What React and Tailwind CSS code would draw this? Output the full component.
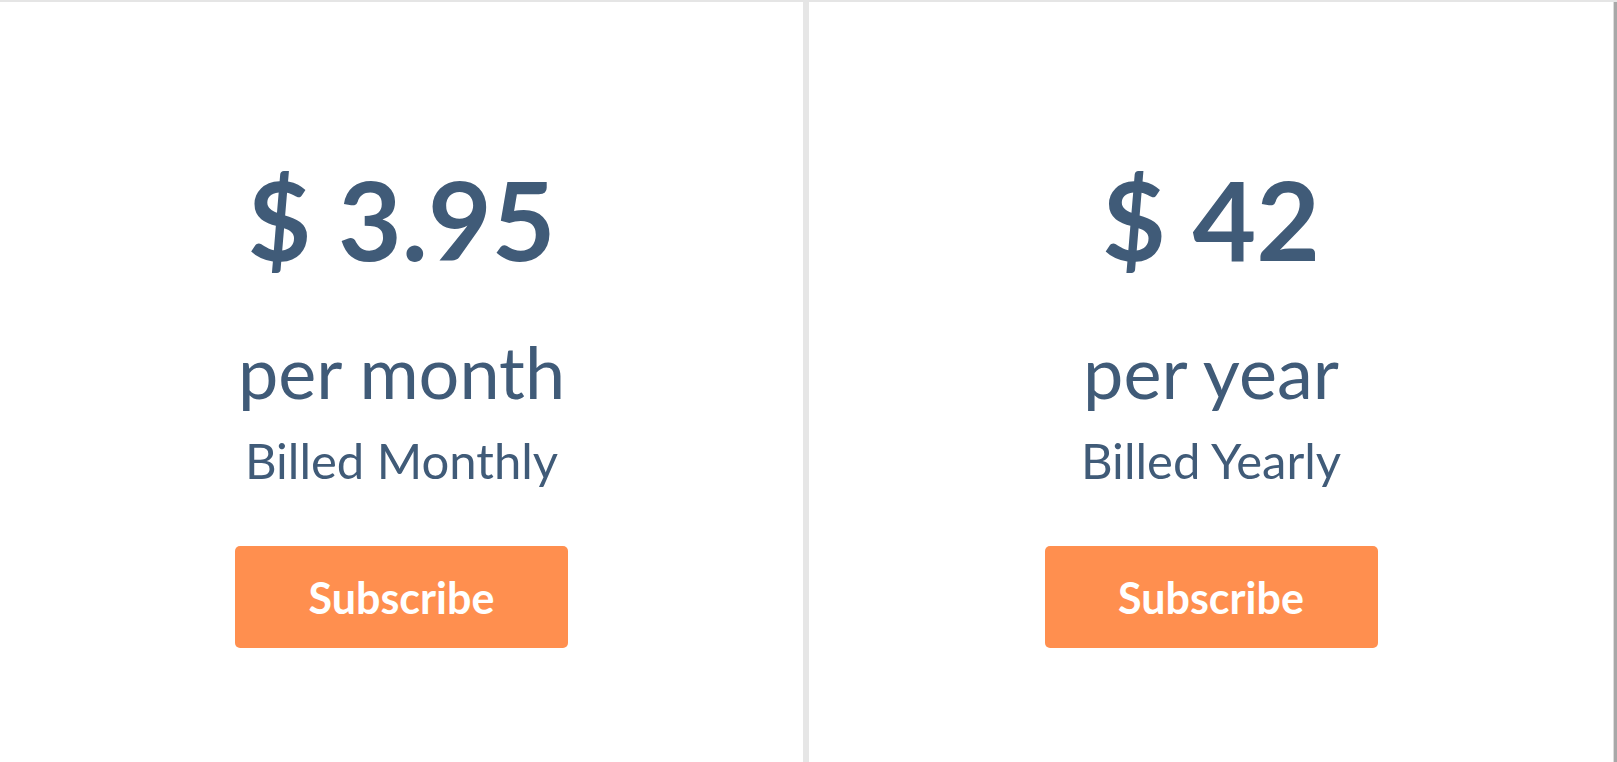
const plans = [
  { price: "$ 3.95", period: "per month", billing: "Billed Monthly" },
  { price: "$ 42", period: "per year", billing: "Billed Yearly" },
];

function PlanCard({ plan }) {
  return (
    <div className="flex flex-col items-center pt-[161px] text-[#405b78] leading-none">
      <h2 className="text-[110px] font-bold leading-none">{plan.price}</h2>
      <p className="mt-[62px] text-[72px] leading-none">{plan.period}</p>
      <p className="mt-[29px] text-[49px] leading-none">{plan.billing}</p>
      <button className="mt-[61px] w-[333px] h-[102px] rounded-[5px] bg-[#ff8f4f] text-white text-[43px] font-bold flex items-center justify-center">
        Subscribe
      </button>
    </div>
  );
}

export default function App() {
  return (
    <div
      className="w-[1617px] h-[762px] overflow-hidden bg-white flex border-t-2 border-[#e5e5e5]"
      style={{ fontFamily: "Lato, 'Open Sans', sans-serif" }}
    >
      <div className="w-[809px] h-full border-r-[6px] border-[#e6e6e6]">
        <PlanCard plan={plans[0]} />
      </div>
      <div className="flex-1 h-full border-r border-[#dcdcdc]">
        <PlanCard plan={plans[1]} />
      </div>
      <div className="w-[3px] h-full bg-[#a8a8a8]" />
    </div>
  );
}
